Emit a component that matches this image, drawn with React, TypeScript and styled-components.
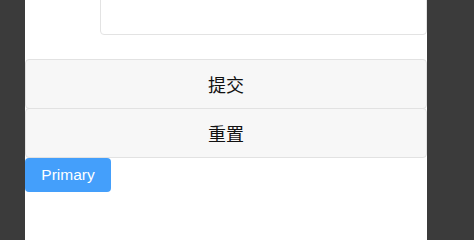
import React from "react";
import styled, { createGlobalStyle } from "styled-components";

const GlobalStyle = createGlobalStyle`
  html, body {
    margin: 0;
    padding: 0;
    height: 100%;
    background: #3b3b3b;
    font-family: "Liberation Sans", Arial, "Noto Sans CJK SC", sans-serif;
    overflow: hidden;
  }
  #root {
    height: 100%;
  }
`;

const Page = styled.div`
  width: 402px;
  height: 100%;
  margin-left: 25px;
  background: #ffffff;
  overflow: hidden;
`;

const Form = styled.div`
  display: flex;
  flex-direction: column;
  margin-top: -40px;
`;

const FieldRow = styled.div`
  display: flex;
  padding-left: 75px;
  margin-bottom: 24px;
`;

const TextArea = styled.textarea`
  flex: 1;
  height: 75px;
  box-sizing: border-box;
  border: 1px solid #e3e3e3;
  border-radius: 4px;
  resize: none;
  outline: none;
  margin: 0;
  display: block;
`;

const BlockButton = styled.button`
  display: block;
  width: 100%;
  height: 50px;
  box-sizing: border-box;
  background: #f7f7f7;
  border: 1px solid #e2e2e2;
  border-radius: 4px;
  font-family: "Noto Sans CJK SC", "Liberation Sans", sans-serif;
  font-size: 18px;
  color: #111111;
  padding: 0;
  margin: 0;
  cursor: pointer;

  & + & {
    margin-top: -1px;
  }
`;

const PrimaryButton = styled.button`
  align-self: flex-start;
  height: 34px;
  width: 86px;
  box-sizing: border-box;
  background: #449ffb;
  border: none;
  border-radius: 4px;
  color: #ffffff;
  font-family: "Liberation Sans", Arial, sans-serif;
  font-size: 15.5px;
  padding: 0;
  margin: 0;
  cursor: pointer;
`;

export default function App() {
  return (
    <>
      <GlobalStyle />
      <Page>
        <Form>
          <FieldRow>
            <TextArea />
          </FieldRow>
          <BlockButton>提交</BlockButton>
          <BlockButton>重置</BlockButton>
          <PrimaryButton>Primary</PrimaryButton>
        </Form>
      </Page>
    </>
  );
}
